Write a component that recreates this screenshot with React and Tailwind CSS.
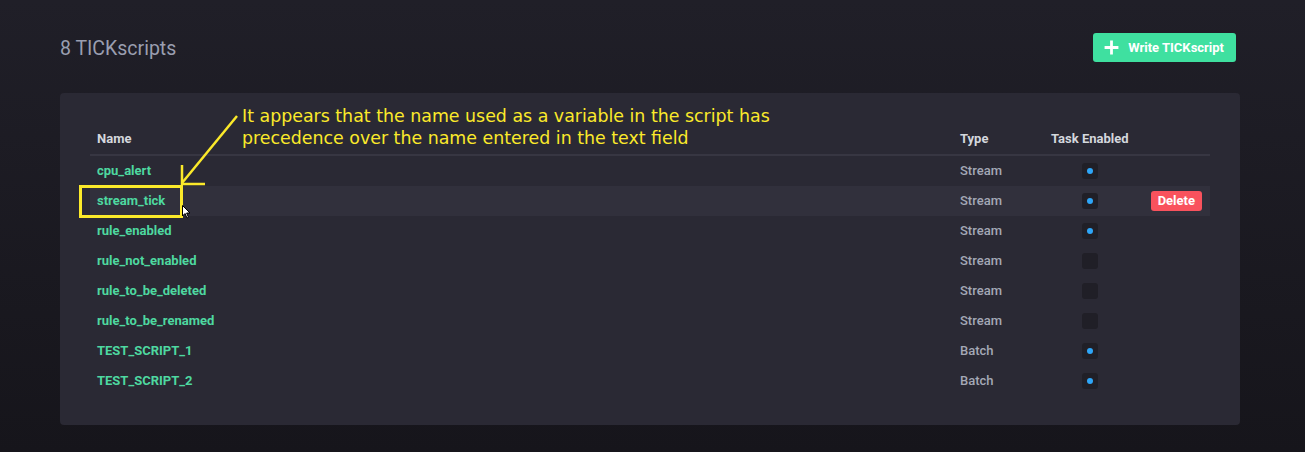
import React from "react";

const rows = [
  { name: "cpu_alert", type: "Stream", enabled: true },
  { name: "stream_tick", type: "Stream", enabled: true, hover: true },
  { name: "rule_enabled", type: "Stream", enabled: true },
  { name: "rule_not_enabled", type: "Stream", enabled: false },
  { name: "rule_to_be_deleted", type: "Stream", enabled: false },
  { name: "rule_to_be_renamed", type: "Stream", enabled: false },
  { name: "TEST_SCRIPT_1", type: "Batch", enabled: true },
  { name: "TEST_SCRIPT_2", type: "Batch", enabled: true },
];

export default function App() {
  return (
    <div
      className="relative w-[1305px] h-[452px] overflow-hidden bg-gradient-to-b from-[#201f28] to-[#16151b]"
      style={{ fontFamily: "Roboto, 'Liberation Sans', sans-serif" }}
    >
      <div className="pl-[60px] pr-[65px]">
        <div className="flex items-center justify-between h-[93px]">
          <h1 className="text-[19.5px] text-[#9a9eb0] font-normal mt-[5px]">8 TICKscripts</h1>
          <button className="flex items-center gap-[8px] h-[29px] pl-[10px] pr-[12px] mr-[4px] mt-[2px] rounded-[3px] bg-[#3fe0a0] text-white text-[13px] font-bold">
            <svg width="17" height="17" viewBox="0 0 16 16">
              <path d="M8 1.5v13M1.5 8h13" stroke="white" strokeWidth="2.6" />
            </svg>
            Write TICKscript
          </button>
        </div>
        <div className="rounded-[4px] bg-[#2a2934] px-[30px] pt-[30px] pb-[29px]">
          <div className="grid grid-cols-[863px_91px_92px_1fr] h-[33px] items-center border-b-2 border-[#373642] text-[13px] font-bold text-[#d4d7dd]">
            <div className="pl-[7px]">Name</div>
            <div className="pl-[7px]">Type</div>
            <div className="pl-[7px]">Task Enabled</div>
            <div />
          </div>
          {rows.map((r) => (
            <div
              key={r.name}
              className={
                "grid grid-cols-[863px_91px_92px_1fr] h-[30px] items-center text-[13px] " +
                (r.hover ? "bg-[#31303c]" : "")
              }
            >
              <div className="pl-[7px] font-bold text-[#4ed8a0]">{r.name}</div>
              <div className="pl-[7px] font-medium text-[#a4a8b6]">{r.type}</div>
              <div className="flex justify-center">
                <div className="w-[16px] h-[16px] rounded-[3px] bg-[#201f27] flex items-center justify-center">
                  {r.enabled && <div className="w-[6px] h-[6px] rounded-full bg-[#2ea6f8]" />}
                </div>
              </div>
              <div className="flex justify-end pr-[8px]">
                {r.hover && (
                  <button className="h-[20px] px-[7px] rounded-[3px] bg-[#f9525d] text-white text-[13px] font-bold">
                    Delete
                  </button>
                )}
              </div>
            </div>
          ))}
        </div>
      </div>

      {/* Annotation overlay */}
      <div
        className="absolute left-[242px] top-[106px] text-[17.4px] leading-[21.5px] text-[#fbe92a]"
        style={{ fontFamily: "'DejaVu Sans', sans-serif" }}
      >
        <div>It appears that the name used as a variable in the script has</div>
        <div>precedence over the name entered in the text field</div>
      </div>
      <div className="absolute left-[79px] top-[185px] w-[104px] h-[33px] border-[3px] border-[#fbe92a]" />
      <svg className="absolute left-0 top-0" width="1305" height="452">
        <line x1="237" y1="116" x2="182" y2="183" stroke="#fbe92a" strokeWidth="2.5" />
        <line x1="182" y1="165" x2="182" y2="185" stroke="#fbe92a" strokeWidth="2.5" />
        <line x1="182" y1="184" x2="205" y2="184" stroke="#fbe92a" strokeWidth="2.5" />
        <path
          d="M182.5 205.5 L182.5 216 L185 213.5 L187 218 L188.5 217.3 L186.6 213 L190 213 Z"
          fill="white"
          stroke="black"
          strokeWidth="1"
        />
      </svg>
    </div>
  );
}
